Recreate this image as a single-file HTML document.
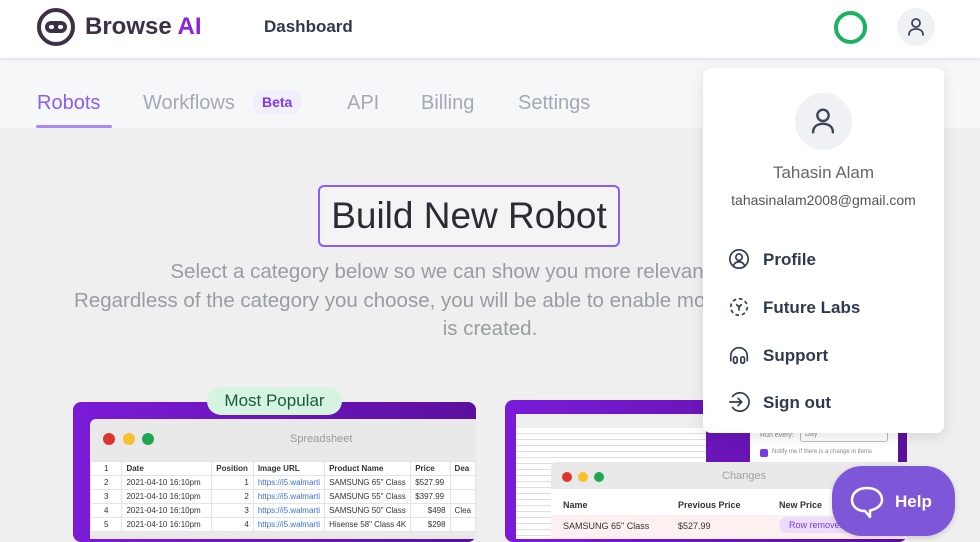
<!DOCTYPE html>
<html><head><meta charset="utf-8"><style>
*{box-sizing:border-box;margin:0;padding:0}
body{width:980px;height:539px;overflow:hidden;background:#efefef;font-family:"Liberation Sans",sans-serif;position:relative}
.hdr{position:absolute;left:0;top:0;width:980px;height:58px;background:#fff;box-shadow:0 1px 4px rgba(0,0,0,.12);z-index:3}
.tabs{position:absolute;left:0;top:58px;width:980px;height:70px;background:#f6f7f9}
.tab{position:absolute;top:92px;font-size:20px;color:#a3aab5}
.abs{position:absolute}
table{border-collapse:collapse;font-size:8px;color:#333}
td{border:1px solid #e4e4e4;height:14px;padding:0 4px;white-space:nowrap;background:#fff}
.mi{position:absolute;left:763px;font-size:17px;color:#2f3a4d;font-weight:bold}
</style></head><body>
<div class="hdr">
 <svg class="abs" style="left:36px;top:7px" width="40" height="40" viewBox="0 0 40 40"><circle cx="20" cy="20" r="17" fill="none" stroke="#3e3046" stroke-width="4"/><rect x="9" y="14" width="22" height="12" rx="6" fill="#3e3046"/><rect x="13" y="18" width="5" height="4" rx="2" fill="#fff"/><rect x="22" y="18" width="5" height="4" rx="2" fill="#fff"/></svg>
 <div class="abs" style="left:85px;top:13px;font-size:24px;font-weight:bold;color:#3e3046">Browse <span style="color:#8a22e0">AI</span></div>
 <div class="abs" style="left:264px;top:17px;font-size:17px;color:#2f3a4d;font-weight:bold">Dashboard</div>
 <div class="abs" style="left:834px;top:11px;width:33px;height:33px;border:4px solid #17b35e;border-radius:50%"></div>
 <div class="abs" style="left:897px;top:8px;width:38px;height:38px;border-radius:50%;background:#eff1f5"></div>
 <svg class="abs" style="left:904px;top:15px" width="24" height="24" viewBox="0 0 24 24" fill="none" stroke="#3a4559" stroke-width="1.8" stroke-linecap="round"><circle cx="12" cy="8" r="4"/><path d="M5 20c0-4 3-6 7-6s7 2 7 6"/></svg>
</div>
<div class="tabs"></div>
<div class="tab" style="left:37px;color:#8b5cf6">Robots</div>
<div class="abs" style="left:36px;top:125px;width:76px;height:3px;background:#a78bfa;border-radius:2px"></div>
<div class="tab" style="left:143px">Workflows</div>
<div class="abs" style="left:253px;top:90px;padding:4px 9px;background:#f3eefc;border-radius:10px;font-size:14px;color:#7c3aed;font-weight:bold">Beta</div>
<div class="tab" style="left:347px">API</div>
<div class="tab" style="left:421px">Billing</div>
<div class="tab" style="left:518px">Settings</div>

<div class="abs" style="left:318px;top:185px;width:302px;height:62px;border:2px solid #8b5cf6;border-radius:6px;font-size:37px;color:#2b2b33;text-align:center;line-height:58px;background:#f4f4f4;white-space:nowrap">Build New Robot</div>
<div class="abs" style="left:-40px;top:258px;width:1060px;text-align:center;font-size:20.5px;line-height:28.5px;color:#9a9ca3">Select a category below so we can show you more relevant templates.<br>Regardless of the category you choose, you will be able to enable monitoring after the robot<br>is created.</div>

<div class="abs" style="left:73px;top:402px;width:403px;height:140px;border-radius:8px;background:linear-gradient(90deg,#7a1bd8,#5c0f9e)"></div>
<div class="abs" style="left:207px;top:387px;width:135px;height:28px;border-radius:14px;background:#d5f5e1;font-size:17px;color:#1e5a3a;text-align:center;line-height:28px">Most Popular</div>
<div class="abs" style="left:90px;top:419px;width:386px;height:120px;background:#e9e9e9;border-radius:6px 0 0 0;overflow:hidden">
 <div class="abs" style="left:13px;top:14px;width:12px;height:12px;border-radius:50%;background:#e0342f"></div>
 <div class="abs" style="left:33px;top:14px;width:12px;height:12px;border-radius:50%;background:#f9c02d"></div>
 <div class="abs" style="left:52px;top:14px;width:12px;height:12px;border-radius:50%;background:#21a653"></div>
 <div class="abs" style="left:200px;top:14px;font-size:11px;color:#9a9a9a">Spreadsheet</div>
 <table class="abs" style="left:0;top:42px">
 <tr style="font-weight:bold"><td style="width:40px;text-align:center;font-weight:normal">1</td><td style="width:93px">Date</td><td style="width:42px">Position</td><td style="width:65px">Image URL</td><td style="width:84px">Product Name</td><td style="width:40px">Price</td><td>Dea</td></tr>
 <tr><td style="text-align:center">2</td><td>2021-04-10 16:10pm</td><td style="text-align:right">1</td><td style="color:#3b6ee0">https://i5.walmarti</td><td>SAMSUNG 65" Class</td><td>$527.99</td><td></td></tr>
 <tr><td style="text-align:center">3</td><td>2021-04-10 16:10pm</td><td style="text-align:right">2</td><td style="color:#3b6ee0">https://i5.walmarti</td><td>SAMSUNG 55" Class</td><td>$397.99</td><td></td></tr>
 <tr><td style="text-align:center">4</td><td>2021-04-10 16:10pm</td><td style="text-align:right">3</td><td style="color:#3b6ee0">https://i5.walmarti</td><td>SAMSUNG 50" Class</td><td style="text-align:right">$498</td><td>Clea</td></tr>
 <tr><td style="text-align:center">5</td><td>2021-04-10 16:10pm</td><td style="text-align:right">4</td><td style="color:#3b6ee0">https://i5.walmarti</td><td>Hisense 58" Class 4K</td><td style="text-align:right">$298</td><td></td></tr>
 </table>
</div>

<div class="abs" style="left:505px;top:400px;width:402px;height:142px;border-radius:8px;background:linear-gradient(90deg,#7a1bd8,#5c0f9e)"></div>
<div class="abs" style="left:516px;top:414px;width:190px;height:125px;background:#fff;border-radius:4px">
 <div style="height:14px;background:#eee"></div>
 <div style="height:111px;background:repeating-linear-gradient(#fff 0 5px,#ddd 5px 6px)"></div>
</div>
<div class="abs" style="left:750px;top:418px;width:148px;height:60px;background:#fff;border-radius:4px">
 <div class="abs" style="left:10px;top:14px;font-size:7px;color:#888">Run every:</div>
 <div class="abs" style="left:50px;top:10px;width:88px;height:14px;border:1px solid #bbb;border-radius:3px;font-size:7px;color:#888;padding:2px 4px">Day</div>
 <div class="abs" style="left:10px;top:31px;width:8px;height:8px;background:#7c3aed;border-radius:2px"></div>
 <div class="abs" style="left:22px;top:31px;font-size:6px;color:#888">Notify me if there is a change in items</div>
</div>
<div class="abs" style="left:551px;top:462px;width:356px;height:77px;background:#fff;border-radius:6px 0 0 0;overflow:hidden">
 <div style="height:27px;background:#e9e9e9;position:relative">
  <div class="abs" style="left:11px;top:10px;width:10px;height:10px;border-radius:50%;background:#e0342f"></div>
  <div class="abs" style="left:27px;top:10px;width:10px;height:10px;border-radius:50%;background:#f9c02d"></div>
  <div class="abs" style="left:43px;top:10px;width:10px;height:10px;border-radius:50%;background:#21a653"></div>
  <div class="abs" style="left:171px;top:8px;font-size:11px;color:#a0a0a0">Changes</div>
 </div>
 <div class="abs" style="left:12px;top:38px;font-size:9px;font-weight:bold;color:#333">Name</div>
 <div class="abs" style="left:127px;top:38px;font-size:9px;font-weight:bold;color:#333">Previous Price</div>
 <div class="abs" style="left:228px;top:38px;font-size:9px;font-weight:bold;color:#333">New Price</div>
 <div class="abs" style="left:0;top:53px;width:356px;height:24px;background:#fdf0f0"></div>
 <div class="abs" style="left:12px;top:59px;font-size:9px;color:#333">SAMSUNG 65" Class</div>
 <div class="abs" style="left:127px;top:59px;font-size:9px;color:#333">$527.99</div>
 <div class="abs" style="left:228px;top:55px;width:80px;height:16px;background:#ecdcfb;border-radius:8px;font-size:9px;color:#7c3aed;padding:3px 10px;white-space:nowrap">Row removed</div>
</div>

<div class="abs" style="left:703px;top:68px;width:241px;height:365px;background:#fff;border-radius:8px;box-shadow:0 4px 14px rgba(0,0,0,.1)"></div>
<div class="abs" style="left:795px;top:93px;width:57px;height:57px;border-radius:50%;background:#eff1f5"></div>
<svg class="abs" style="left:806px;top:104px" width="34" height="34" viewBox="0 0 24 24" fill="none" stroke="#3a4559" stroke-width="1.7" stroke-linecap="round"><circle cx="12" cy="8" r="4"/><path d="M5 20c0-4 3-6 7-6s7 2 7 6"/></svg>
<div class="abs" style="left:703px;top:163px;width:241px;text-align:center;font-size:17px;color:#666">Tahasin Alam</div>
<div class="abs" style="left:703px;top:192px;width:241px;text-align:center;font-size:14px;color:#555">tahasinalam2008@gmail.com</div>
<svg class="abs" style="left:728px;top:248px" width="22" height="22" viewBox="0 0 24 24" fill="none" stroke="#2f3a4d" stroke-width="1.8"><circle cx="12" cy="12" r="10"/><circle cx="12" cy="10" r="3.5"/><path d="M6 19c1.5-3 3.5-4 6-4s4.5 1 6 4"/></svg>
<div class="mi" style="top:250px">Profile</div>
<svg class="abs" style="left:728px;top:296px" width="22" height="22" viewBox="0 0 24 24" fill="none" stroke="#2f3a4d" stroke-width="1.8" stroke-dasharray="4 3"><circle cx="12" cy="12" r="9"/><path d="M9 9l3 3 3-3M12 12v4" stroke-dasharray="none"/></svg>
<div class="mi" style="top:298px">Future Labs</div>
<svg class="abs" style="left:728px;top:344px" width="22" height="22" viewBox="0 0 24 24" fill="none" stroke="#2f3a4d" stroke-width="1.8"><path d="M3 19v-6a9 9 0 0 1 18 0v6"/><rect x="6" y="14" width="4" height="7" rx="2"/><rect x="14" y="14" width="4" height="7" rx="2"/></svg>
<div class="mi" style="top:346px">Support</div>
<svg class="abs" style="left:728px;top:391px" width="22" height="22" viewBox="0 0 24 24" fill="none" stroke="#2f3a4d" stroke-width="1.8" stroke-linecap="round"><path d="M5 6a10 10 0 1 1 0 12"/><path d="M2 12h13M11 8l4 4-4 4"/></svg>
<div class="mi" style="top:393px">Sign out</div>

<div class="abs" style="left:832px;top:466px;width:123px;height:70px;border-radius:30px;background:#7e57d8;box-shadow:0 2px 6px rgba(0,0,0,.15)"></div>
<svg class="abs" style="left:849px;top:484px" width="36" height="36" viewBox="0 0 36 36" fill="none" stroke="#fff" stroke-width="2.5" stroke-linejoin="round"><path d="M18 4C9 4 3 9 3 16s6 11 13 11l5 6v-6.5c7-1.5 12-5.5 12-10.5 0-7-6-12-15-12z"/></svg>
<div class="abs" style="left:895px;top:492px;font-size:17px;color:#fff;font-weight:bold">Help</div>
</body></html>
